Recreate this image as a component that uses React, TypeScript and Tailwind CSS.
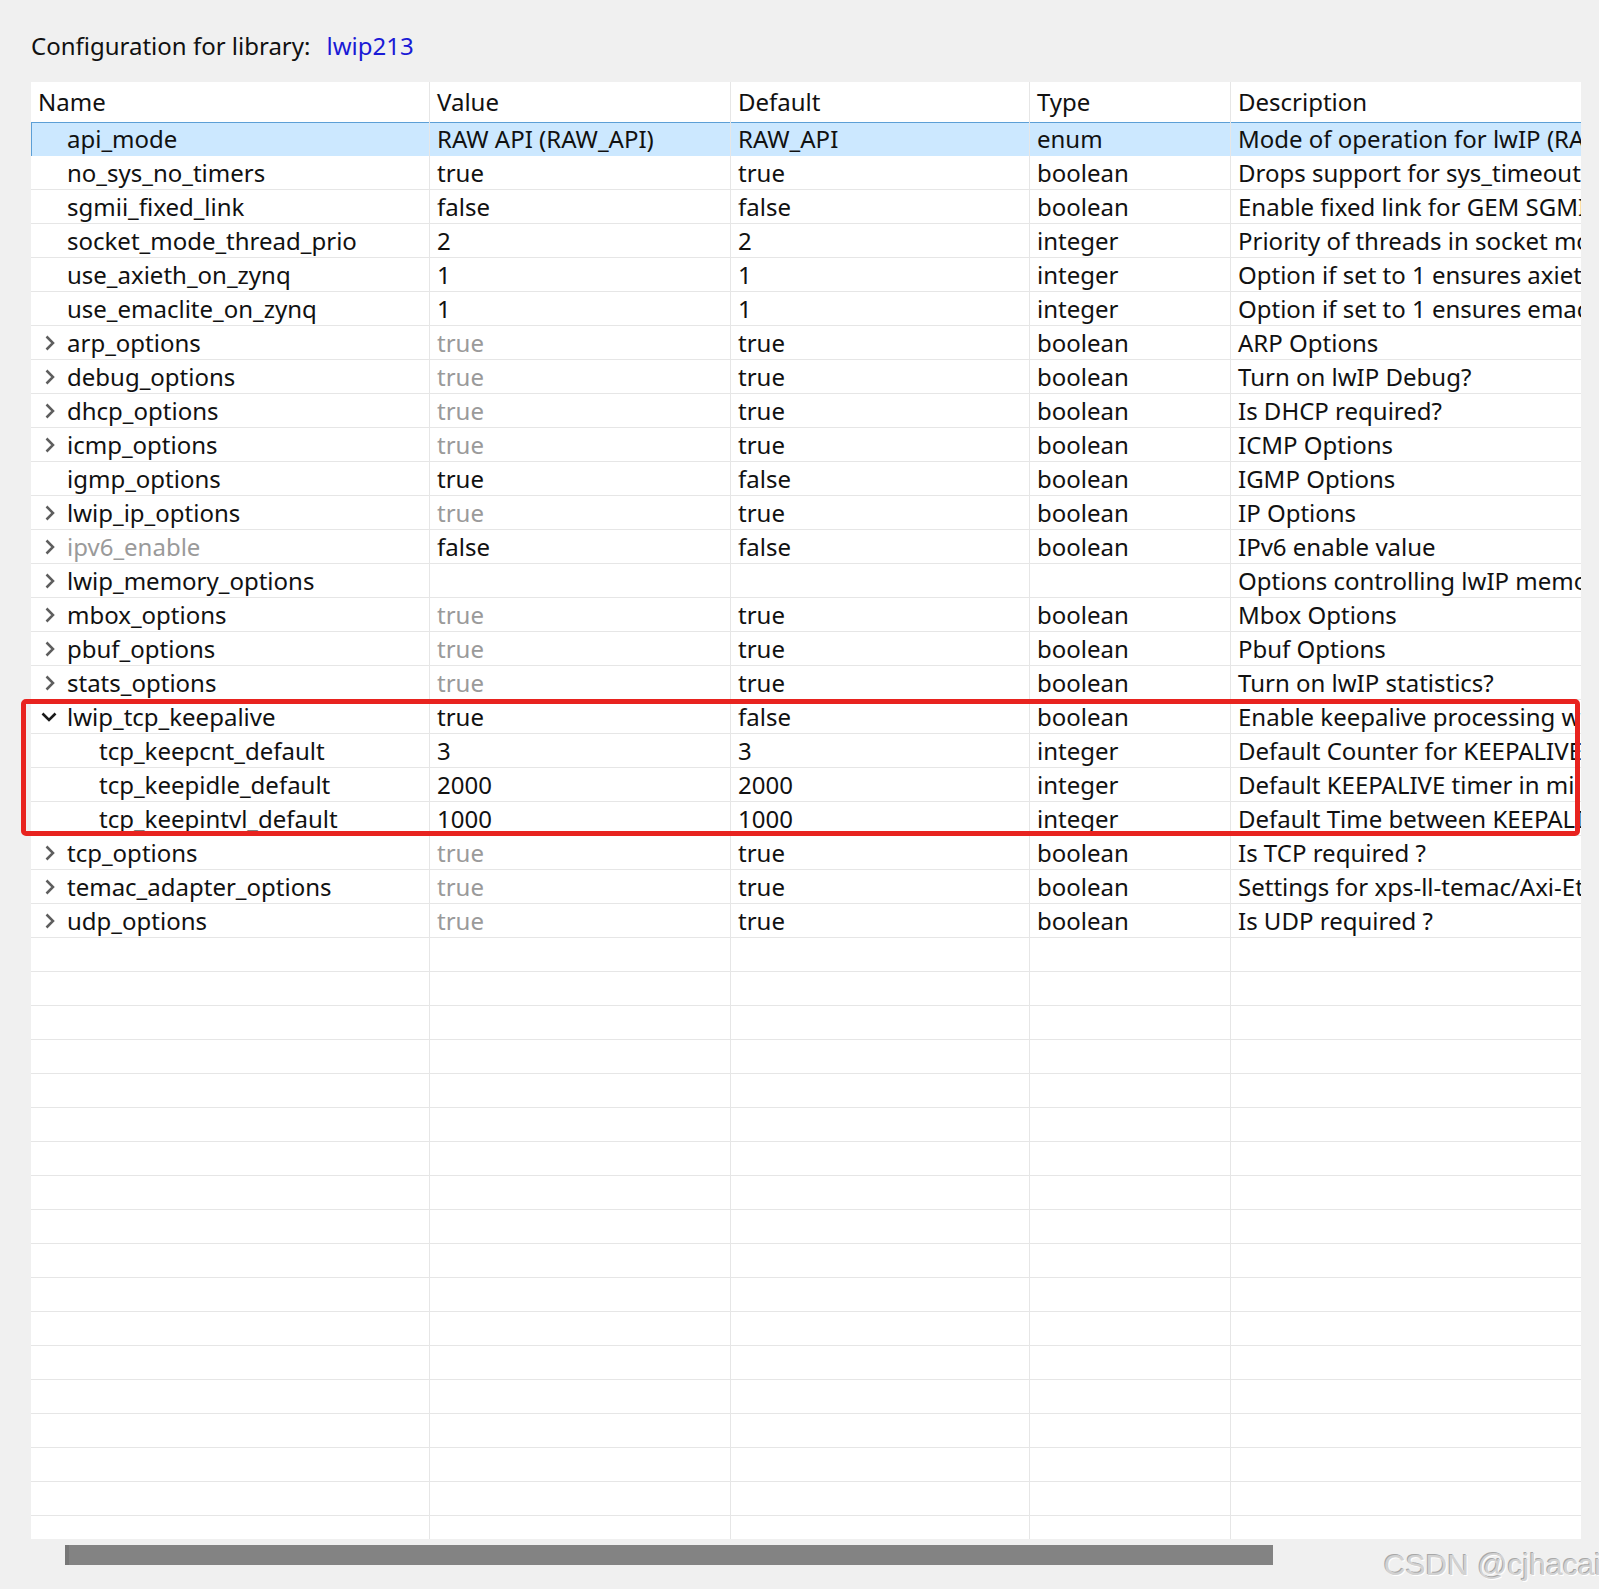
import type { ReactNode } from 'react'

type Row = {
  name: string
  value: string
  def: string
  type: string
  desc: string
  level?: number
  chevron?: 'right' | 'down'
  muted?: boolean
  mutedName?: boolean
}

const rows: Row[] = [
  { name: 'api_mode', value: 'RAW API (RAW_API)', def: 'RAW_API', type: 'enum', desc: 'Mode of operation for lwIP (RAW API/SOCKET API)' },
  { name: 'no_sys_no_timers', value: 'true', def: 'true', type: 'boolean', desc: 'Drops support for sys_timeout when NO_SYS==1' },
  { name: 'sgmii_fixed_link', value: 'false', def: 'false', type: 'boolean', desc: 'Enable fixed link for GEM SGMII at 1Gbps' },
  { name: 'socket_mode_thread_prio', value: '2', def: '2', type: 'integer', desc: 'Priority of threads in socket mode' },
  { name: 'use_axieth_on_zynq', value: '1', def: '1', type: 'integer', desc: 'Option if set to 1 ensures axiethernet adapter being used' },
  { name: 'use_emaclite_on_zynq', value: '1', def: '1', type: 'integer', desc: 'Option if set to 1 ensures emaclite adapter being used' },
  { name: 'arp_options', value: 'true', def: 'true', type: 'boolean', desc: 'ARP Options', chevron: 'right', muted: true },
  { name: 'debug_options', value: 'true', def: 'true', type: 'boolean', desc: 'Turn on lwIP Debug?', chevron: 'right', muted: true },
  { name: 'dhcp_options', value: 'true', def: 'true', type: 'boolean', desc: 'Is DHCP required?', chevron: 'right', muted: true },
  { name: 'icmp_options', value: 'true', def: 'true', type: 'boolean', desc: 'ICMP Options', chevron: 'right', muted: true },
  { name: 'igmp_options', value: 'true', def: 'false', type: 'boolean', desc: 'IGMP Options' },
  { name: 'lwip_ip_options', value: 'true', def: 'true', type: 'boolean', desc: 'IP Options', chevron: 'right', muted: true },
  { name: 'ipv6_enable', value: 'false', def: 'false', type: 'boolean', desc: 'IPv6 enable value', chevron: 'right', mutedName: true },
  { name: 'lwip_memory_options', value: '', def: '', type: '', desc: 'Options controlling lwIP memory usage', chevron: 'right' },
  { name: 'mbox_options', value: 'true', def: 'true', type: 'boolean', desc: 'Mbox Options', chevron: 'right', muted: true },
  { name: 'pbuf_options', value: 'true', def: 'true', type: 'boolean', desc: 'Pbuf Options', chevron: 'right', muted: true },
  { name: 'stats_options', value: 'true', def: 'true', type: 'boolean', desc: 'Turn on lwIP statistics?', chevron: 'right', muted: true },
  { name: 'lwip_tcp_keepalive', value: 'true', def: 'false', type: 'boolean', desc: 'Enable keepalive processing with default interval', chevron: 'down' },
  { name: 'tcp_keepcnt_default', value: '3', def: '3', type: 'integer', desc: 'Default Counter for KEEPALIVE probes', level: 2 },
  { name: 'tcp_keepidle_default', value: '2000', def: '2000', type: 'integer', desc: 'Default KEEPALIVE timer in milliseconds', level: 2 },
  { name: 'tcp_keepintvl_default', value: '1000', def: '1000', type: 'integer', desc: 'Default Time between KEEPALIVE probes', level: 2 },
  { name: 'tcp_options', value: 'true', def: 'true', type: 'boolean', desc: 'Is TCP required ?', chevron: 'right', muted: true },
  { name: 'temac_adapter_options', value: 'true', def: 'true', type: 'boolean', desc: 'Settings for xps-ll-temac/Axi-Ethernet/Gem lwIP adapter', chevron: 'right', muted: true },
  { name: 'udp_options', value: 'true', def: 'true', type: 'boolean', desc: 'Is UDP required ?', chevron: 'right', muted: true },
]

const cols = 'grid grid-cols-[399px_301px_299px_201px_350px]'

function Chevron({ dir }: { dir: 'right' | 'down' }) {
  if (dir === 'down') {
    return (
      <svg width="18" height="18" viewBox="0 0 18 18" className="absolute left-[9px] top-[8px]">
        <path d="M2.5 5.5 L9 12 L15.5 5.5" fill="none" stroke="#1a1a1a" strokeWidth="2.6" />
      </svg>
    )
  }
  return (
    <svg width="18" height="18" viewBox="0 0 18 18" className="absolute left-[10px] top-[8px]">
      <path d="M5.5 2.5 L12 9 L5.5 15.5" fill="none" stroke="#5e5e5e" strokeWidth="2.5" />
    </svg>
  )
}

function Cell({ children, className = '' }: { children?: ReactNode; className?: string }) {
  return (
    <div className={`flex items-center overflow-hidden whitespace-nowrap border-r border-[#e6e6e6] pl-[7px] ${className}`}>
      {children}
    </div>
  )
}

export default function App() {
  const empties = Array.from({ length: 17 })

  return (
    <div className="min-h-[1589px] w-[1599px] overflow-hidden bg-[#f0f0f0] font-['Noto_Sans',sans-serif] text-[24px] text-[#111]">
      <div className="flex h-[82px] items-center pl-[31px] pt-[10px]">
        <span>Configuration for library:</span>
        <span className="ml-[16px] text-[#1a1ad6]">lwip213</span>
      </div>

      <div className="relative ml-[31px] w-[1550px] bg-white">
        {/* header */}
        <div className={`${cols} h-[40px]`}>
          {['Name', 'Value', 'Default', 'Type', 'Description'].map((h, i) => (
            <Cell key={h} className={`pl-[6px] ${i === 4 ? 'border-r-0' : ''}`}>
              {h}
            </Cell>
          ))}
        </div>

        {rows.map((r, i) => {
          const selected = i === 0
          const indent = r.level === 2 ? 'pl-[68px]' : 'pl-[36px]'
          return (
            <div
              key={r.name}
              className={`${cols} h-[34px] ${
                selected
                  ? 'bg-[#cce8ff] shadow-[inset_1px_1px_0_#5c9fd6]'
                  : 'border-b border-[#e6e6e6]'
              }`}
            >
              <Cell className={`relative ${indent} ${selected ? 'border-[#cce8ff]' : ''}`}>
                {r.chevron && <Chevron dir={r.chevron} />}
                <span className={r.mutedName ? 'text-[#9a9a9a]' : ''}>{r.name}</span>
              </Cell>
              <Cell className={selected ? 'border-[#cce8ff]' : ''}>
                <span className={r.muted ? 'text-[#9a9a9a]' : ''}>{r.value}</span>
              </Cell>
              <Cell className={selected ? 'border-[#cce8ff]' : ''}>{r.def}</Cell>
              <Cell className={selected ? 'border-[#cce8ff]' : ''}>{r.type}</Cell>
              <Cell className="border-r-0">{r.desc}</Cell>
            </div>
          )
        })}

        {empties.map((_, i) => (
          <div key={i} className={`${cols} h-[34px] border-b border-[#e6e6e6]`}>
            <Cell />
            <Cell />
            <Cell />
            <Cell />
            <Cell className="border-r-0" />
          </div>
        ))}
        <div className={`${cols} h-[23px]`}>
          <Cell />
          <Cell />
          <Cell />
          <Cell />
          <Cell className="border-r-0" />
        </div>

        {/* highlight box */}
        <div className="pointer-events-none absolute left-[-10px] top-[617px] h-[137px] w-[1559px] rounded-[5px] border-[5px] border-[#e8231f]" />
      </div>

      <div className="relative h-[52px]">
        <div className="absolute left-[65px] top-[6px] h-[20px] w-[1208px] border-l-[4px] border-[#777] bg-[#838383]" />
        <div className="absolute right-[-2px] top-[3px] font-['Liberation_Sans',sans-serif] text-[30px] text-[#d2d2d2] [text-shadow:1px_1px_0_#fff,-1px_-1px_0_#a8a8a8]">
          CSDN @cjhacai
        </div>
      </div>
    </div>
  )
}
